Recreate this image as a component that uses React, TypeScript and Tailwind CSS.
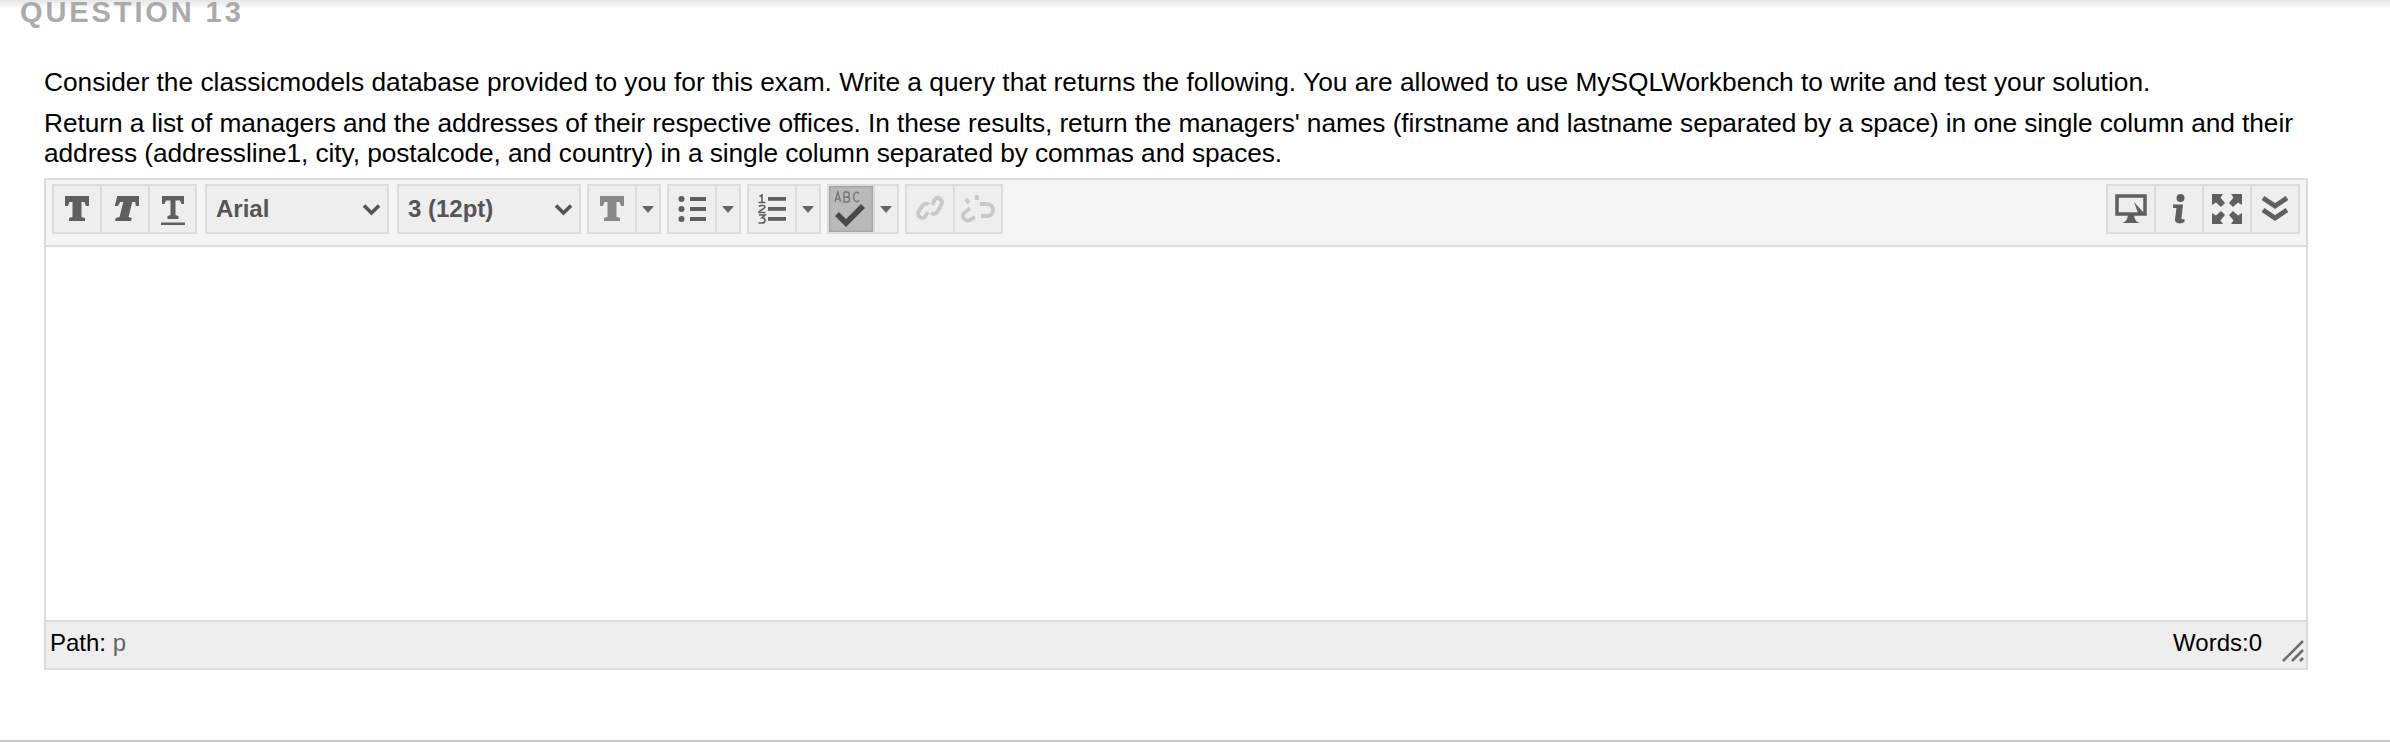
import type { FC, ReactNode } from 'react';

const FONT = "font-['Liberation_Sans',Arial,sans-serif]";

const TGlyph: FC<{ italic?: boolean; underline?: boolean; color?: string }> = ({ italic, underline, color = '#5f5f5f' }) => (
  <svg width="28" height="32" viewBox="0 0 28 32" className="blur-[0.6px]">
    <g transform={italic ? 'translate(5 0) skewX(-14)' : undefined} fill={color}>
      {underline ? (
        <path d="M3 3h22v8h-2.500l-1.500-3.500h-4.500V22l3 1v3H8.500v-3l3-1V7.500H7L5.500 11H3z" />
      ) : (
        <path d="M2 3h24v10h-3l-1.500-4H18.500v15l3.500 1v3H6v-3l3.500-1V9H6.500L5 13H2z" />
      )}
    </g>
    {underline && <rect x="2" y="29.500" width="24" height="2.500" fill={color} />}
  </svg>
);

const Caret = () => (
  <svg width="12" height="7" viewBox="0 0 12 7">
    <path d="M0 0h12L6 7z" fill="#666" />
  </svg>
);

const Chevron = () => (
  <svg width="19" height="13" viewBox="0 0 19 13" fill="none">
    <path d="M2 2.500l7.500 7.500L17 2.500" stroke="#555" strokeWidth="3.600" />
  </svg>
);

const BulletList = () => (
  <svg width="28" height="28" viewBox="0 0 28 28" fill="#5f5f5f" className="blur-[0.5px]">
    <circle cx="3.500" cy="4" r="3" />
    <circle cx="3.500" cy="14" r="3" />
    <circle cx="3.500" cy="24" r="3" />
    <rect x="12" y="2" width="16" height="4" />
    <rect x="12" y="12" width="16" height="4" />
    <rect x="12" y="22" width="16" height="4" />
  </svg>
);

const NumberList = () => (
  <svg width="30" height="30" viewBox="0 0 30 30" fill="none" className="blur-[0.5px]">
    <g stroke="#5f5f5f" strokeWidth="1.600">
      <path d="M2.500 2.500L5 1v7.500M1.500 8.500h7" />
      <path d="M2 12.500c1-1.500 6-1.500 6 .5 0 2-6 3-6 5.500h6.500" />
      <path d="M2 21h6l-3 2.800c4 0 4 5.200 0 5.200H1.500" />
    </g>
    <g fill="#5f5f5f">
      <rect x="11" y="3" width="18" height="3.800" />
      <rect x="11" y="13" width="18" height="3.800" />
      <rect x="11" y="23" width="18" height="3.800" />
    </g>
  </svg>
);

const SpellCheck = () => (
  <svg width="36" height="38" viewBox="0 0 36 38" fill="none" className="blur-[0.4px]">
    <g stroke="#777" strokeWidth="1.400">
      <path d="M2 12l2.800-10 2.800 10M3 9h3.600" />
      <path d="M11 2v10h3c3.400 0 3.400-5 0-5h-3m3 0c3 0 3-5 0-5h-3" />
      <path d="M26 3.500c-2-2.500-5.500-1-5.500 3.500s3.500 6 5.500 3.500" />
    </g>
    <path d="M4 24l9 9L30 16" stroke="#484848" strokeWidth="5.500" />
  </svg>
);

const LinkIcon = () => (
  <svg width="30" height="30" viewBox="0 0 26 28" fill="none" stroke="#c8c8c8" strokeWidth="3.600" className="blur-[0.5px]">
    <path d="M11 17l-3 4.500a4 4 0 0 1-6-4.500l4-6c2-2.500 4.500-2.500 6-1" />
    <path d="M15 10l3-5.500a4 4 0 0 1 6 4.500l-4 7.500c-2 2.500-4.500 2.500-6 1" />
  </svg>
);

const UnlinkIcon = () => (
  <svg width="36" height="30" viewBox="0 0 36 30" fill="none" stroke="#c8c8c8" strokeWidth="3.800" className="blur-[0.5px]">
    <path d="M10 14l-6 5c-3 4 1 9 6 7l5-3" />
    <path d="M20 10h7c8 0 8 12 0 12h-6" />
    <path d="M9 9L6 5M17 6l-.5-5" />
  </svg>
);

const Monitor = () => (
  <svg width="32" height="30" viewBox="0 0 32 30" fill="none" className="blur-[0.4px]">
    <rect x="2" y="2" width="28" height="18" stroke="#5f5f5f" strokeWidth="3.500" />
    <path d="M19 8l10 11h-6z" fill="#5f5f5f" />
    <path d="M7 29c4-1 5-3 6-8h6c1 5 2 7 6 8z" fill="#5f5f5f" />
  </svg>
);

const Info = () => (
  <svg width="14" height="30" viewBox="0 0 14 30" fill="#5f5f5f" className="blur-[0.4px]">
    <circle cx="8.500" cy="4" r="4" />
    <path d="M1 10.500h10L9.500 24c0 1.500 1 1.500 3 1V28c-3 2-10 2.500-9.500-3L4.500 14H1z" />
  </svg>
);

const Expand = () => (
  <svg width="30" height="30" viewBox="0 0 30 30" fill="#5f5f5f" className="blur-[0.4px]">
    <path d="M0 0h11L8.500 3.500 13 9l-4 4-5-4.500L0 11z" />
    <path d="M30 0H19l2.500 3.500L17 9l4 4 5-4.500 4 2.500z" />
    <path d="M0 30h11l-2.500-3.500L13 21l-4-4-5 4.500L0 19z" />
    <path d="M30 30H19l2.500-3.500L17 21l4-4 5 4.500 4-2.500z" />
  </svg>
);

const DoubleChevron = () => (
  <svg width="28" height="28" viewBox="0 0 28 28" fill="none" stroke="#5f5f5f" strokeWidth="4.800" className="blur-[0.3px]">
    <path d="M2 3l12 8 12-8" />
    <path d="M2 15l12 8 12-8" />
  </svg>
);

const Grip = () => (
  <svg width="22" height="22" viewBox="0 0 22 22" stroke="#6e6e6e" strokeWidth="2.600" className="absolute right-[2px] bottom-[6px]">
    <path d="M1 21L21 1M10 21L21 10M18 21l3-3" />
  </svg>
);

const Btn: FC<{ w: string; children: ReactNode; active?: boolean; last?: boolean }> = ({ w, children, active, last }) => (
  <div className={`${w} flex items-center justify-center ${last ? '' : 'border-r-2 border-[#dcdcdc]'} ${active ? 'bg-[#b9b9b9] shadow-[inset_0_0_3px_#888]' : ''}`}>
    {children}
  </div>
);

const Group: FC<{ children: ReactNode }> = ({ children }) => (
  <div className="flex h-[50px] border-2 border-[#dcdcdc] bg-[#eeeeee]">{children}</div>
);

const SelectBox: FC<{ label: string; w: string }> = ({ label, w }) => (
  <div className={`${w} flex h-[50px] items-center justify-between border-2 border-[#dcdcdc] bg-[#eeeeee] pl-[9px] pr-[6px] text-[24px] font-bold text-[#555]`}>
    <span>{label}</span>
    <Chevron />
  </div>
);

export default function App() {
  return (
    <div className={`h-[748px] w-[2390px] overflow-hidden bg-white text-black ${FONT}`}>
      <div className="h-[742px] border-b-2 border-[#c9c9c9] bg-linear-to-b from-[#e6e6e6] to-white to-[9px]">
        <div className="h-[24px] pl-[20px] text-[29px] leading-[24px] font-bold tracking-[2.900px] text-[#aaaaaa]">
          QUESTION 13
        </div>

        <div className="mt-[43px] pl-[44px] pr-[70px] text-[26.300px] leading-[30px]">
          <p>
            Consider the classicmodels database provided to you for this exam. Write a query that returns the following. You are allowed to use MySQLWorkbench to write and test your solution.
          </p>
          <p className="mt-[11px] tracking-[-0.080px]">
            Return a list of managers and the addresses of their respective offices. In these results, return the managers' names (firstname and lastname separated by a space) in one single column and their address (addressline1, city, postalcode, and country) in a single column separated by commas and spaces.
          </p>
        </div>

        <div className="ml-[44px] mt-[10px] w-[2264px] border-2 border-[#dcdcdc]">
          <div className="flex h-[67px] items-start justify-between border-b-2 border-[#dcdcdc] bg-[#f5f5f5] px-[6px] pt-[4px]">
            <div className="flex gap-[6px]">
              <div className="mr-[2px]">
                <Group>
                  <Btn w="w-[48px]"><TGlyph /></Btn>
                  <Btn w="w-[48px]"><TGlyph italic /></Btn>
                  <Btn w="w-[45px]" last><TGlyph underline /></Btn>
                </Group>
              </div>
              <div className="mr-[2px]"><SelectBox label="Arial" w="w-[184px]" /></div>
              <SelectBox label="3 (12pt)" w="w-[184px]" />
              <Group>
                <Btn w="w-[48px]"><TGlyph color="#888" /></Btn>
                <Btn w="w-[22px]" last><Caret /></Btn>
              </Group>
              <Group>
                <Btn w="w-[48px]"><BulletList /></Btn>
                <Btn w="w-[22px]" last><Caret /></Btn>
              </Group>
              <Group>
                <Btn w="w-[48px]"><NumberList /></Btn>
                <Btn w="w-[22px]" last><Caret /></Btn>
              </Group>
              <Group>
                <Btn w="w-[46px]" active><SpellCheck /></Btn>
                <Btn w="w-[22px]" last><Caret /></Btn>
              </Group>
              <Group>
                <Btn w="w-[48px]"><LinkIcon /></Btn>
                <Btn w="w-[46px]" last><UnlinkIcon /></Btn>
              </Group>
            </div>
            <Group>
              <Btn w="w-[48px]"><Monitor /></Btn>
              <Btn w="w-[48px]"><Info /></Btn>
              <Btn w="w-[48px]"><Expand /></Btn>
              <Btn w="w-[46px]" last><DoubleChevron /></Btn>
            </Group>
          </div>

          <div className="h-[373px] bg-white" />

          <div className="relative flex h-[48px] items-center justify-between border-t-2 border-[#dcdcdc] bg-[#eeeeee] pb-[5px] pl-[4px] pr-[44px] text-[24px]">
            <div>
              Path: <span className="text-[#666]">p</span>
            </div>
            <div>Words:0</div>
            <Grip />
          </div>
        </div>
      </div>
    </div>
  );
}
